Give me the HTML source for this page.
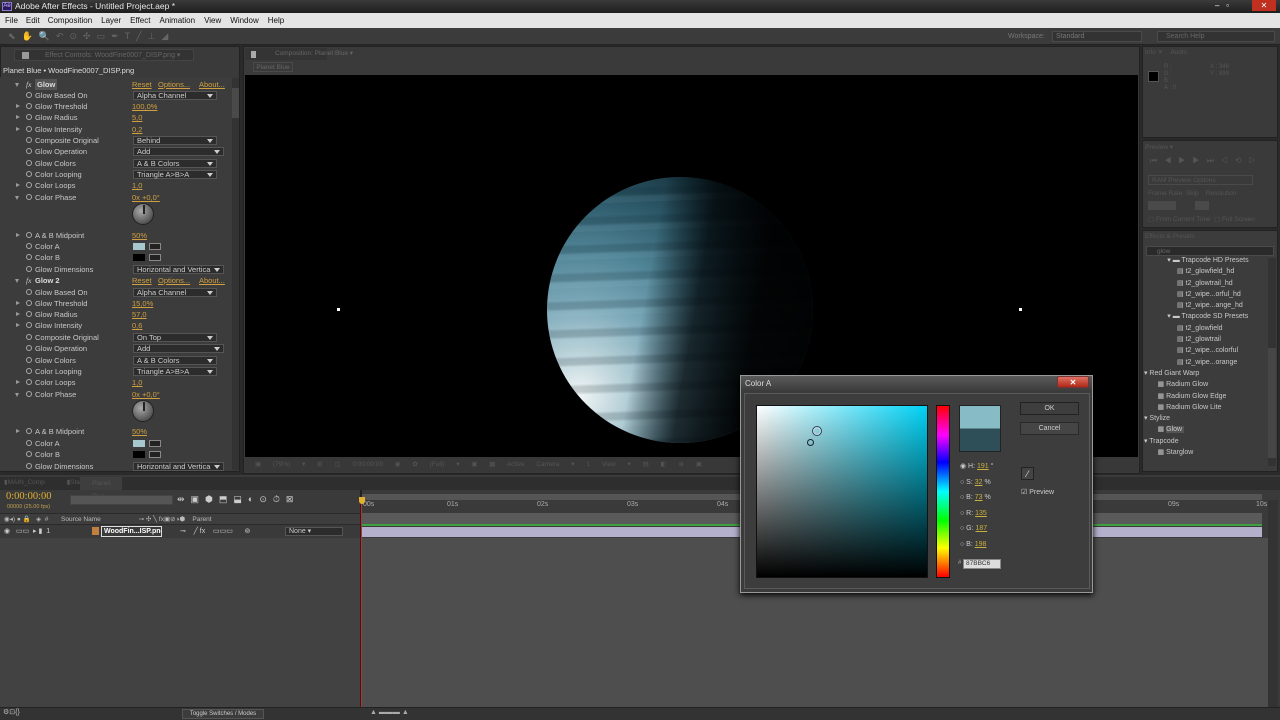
<!DOCTYPE html>
<html><head><meta charset="utf-8"><style>
*{margin:0;padding:0;box-sizing:border-box}
body{width:1280px;height:720px;overflow:hidden;background:#2a2a2a;font-family:"Liberation Sans",sans-serif;position:relative;color:#c8c8c8}
.a{position:absolute}
.r{position:absolute;left:0;width:232px;height:11px;font-size:7.5px;line-height:11px;white-space:nowrap}
.r .l{position:absolute;left:35px}
.r .sw{position:absolute;left:26px;top:2px;width:6px;height:6px;border:1px solid #aaa;border-radius:50%}
.r .ar{position:absolute;left:16px;top:3px;width:0;height:0;border-left:4px solid #999;border-top:2.5px solid transparent;border-bottom:2.5px solid transparent}
.r .dn{position:absolute;left:15px;top:4px;border-top:4px solid #999;border-left:2.5px solid transparent;border-right:2.5px solid transparent}
.r .v{position:absolute;left:132px;color:#d0a040;text-decoration:underline}
.r .dd{position:absolute;left:133px;top:1px;width:84px;height:9px;background:#2c2c2c;border:1px solid #555;line-height:8px;padding-left:3px;color:#ccc}
.r .dd:after{content:"";position:absolute;right:3px;top:2px;border-top:4px solid #ccc;border-left:3px solid transparent;border-right:3px solid transparent}
.r .sq{position:absolute;left:133px;top:2px;width:12px;height:7px}
.r .ey{position:absolute;left:149px;top:2px;width:12px;height:7px;background:#222;border:1px solid #888}
.hd{font-weight:bold;color:#ddd}
.knob{position:absolute;left:132px;width:22px;height:22px;border-radius:50%;background:radial-gradient(circle at 40% 35%,#aaa,#555 70%,#333);border:1px solid #222}
.knob:after{content:"";position:absolute;left:10px;top:1px;width:1.5px;height:9px;background:#222}
.tl{font-size:7px;color:#aaa;position:absolute}
</style></head><body>
<div class="a" style="left:0;top:0;width:1280px;height:13px;background:linear-gradient(#3a3a3a,#1e1e1e)"></div>
<div class="a" style="left:2px;top:2px;width:10px;height:9px;background:#2a1a5a;border:1px solid #8c7ad0;font-size:6px;color:#c9b8ff;line-height:7px;text-align:center">Ae</div>
<div class="a" style="left:15px;top:1px;font-size:8.5px;color:#e8e8e8">Adobe After Effects - Untitled Project.aep *</div>
<div class="a" style="left:1215px;top:1px;font-size:8px;color:#fff">–&nbsp;&nbsp;&nbsp;▫&nbsp;&nbsp;&nbsp;</div>
<div class="a" style="left:1252px;top:0;width:24px;height:11px;background:#c03020;color:#fff;font-size:8px;text-align:center;line-height:11px">✕</div>
<div class="a" style="left:0;top:13px;width:1280px;height:15px;background:#e4e4e4;font-size:8px;color:#111;line-height:15px">
<span style="margin-left:5px">File</span><span style="margin-left:8px">Edit</span><span style="margin-left:8px">Composition</span><span style="margin-left:9px">Layer</span><span style="margin-left:9px">Effect</span><span style="margin-left:9px">Animation</span><span style="margin-left:9px">View</span><span style="margin-left:9px">Window</span><span style="margin-left:9px">Help</span></div>
<div class="a" style="left:0;top:28px;width:1280px;height:17px;background:#3b3b3b;border-bottom:1px solid #222"></div>
<div class="a" style="left:8px;top:31px;font-size:9px;color:#666;letter-spacing:6px">⬉✋🔍↶⊙✣▭✒T╱⊥◢</div>
<div class="a" style="left:1008px;top:33px;font-size:7px;color:#777">Workspace:</div>
<div class="a" style="left:1052px;top:31px;width:90px;height:11px;background:#333;border:1px solid #4a4a4a;font-size:7px;color:#777;padding-left:3px;line-height:10px">Standard</div>
<div class="a" style="left:1157px;top:31px;width:118px;height:11px;background:#333;border:1px solid #4a4a4a;font-size:7px;color:#666;padding-left:8px;line-height:10px">Search Help</div>
<div class="a" style="left:0;top:46px;width:240px;height:426px;background:#3a3a3a;border:1px solid #222"></div>
<div class="a" style="left:14px;top:49px;width:180px;height:12px;background:#333;border:1px solid #444;font-size:7px;color:#666;line-height:11px;padding-left:30px">Effect Controls: WoodFine0007_DISP.png ▾</div>
<div class="a" style="left:22px;top:52px;width:7px;height:7px;background:#999"></div>
<div class="a" style="left:3px;top:66px;font-size:7.5px;color:#ddd">Planet Blue • WoodFine0007_DISP.png</div>
<div class="a" style="left:0;top:77px;width:232px;height:394px;background:#3c3c3c"></div>
<div class="a" style="left:232px;top:78px;width:7px;height:392px;background:#333"></div>
<div class="a" style="left:232px;top:88px;width:7px;height:30px;background:#4a4a4a"></div>

<div class="r" style="top:79px"><span class="dn"></span><span class="a" style="left:26px;color:#ccc;font-style:italic;font-family:'Liberation Serif'">fx</span><span class="l hd" style="background:#555;padding:0 2px">Glow</span><span class="a" style="left:132px;color:#d0a040;text-decoration:underline">Reset</span><span class="a" style="left:158px;color:#d0a040;text-decoration:underline">Options...</span><span class="a" style="left:199px;color:#d0a040;text-decoration:underline">About...</span></div>
<div class="r" style="top:90px"><span class="sw"></span><span class="l">Glow Based On</span><span class="dd">Alpha Channel</span></div>
<div class="r" style="top:101px"><span class="ar"></span><span class="sw"></span><span class="l">Glow Threshold</span><span class="v">100,0%</span></div>
<div class="r" style="top:112px"><span class="ar"></span><span class="sw"></span><span class="l">Glow Radius</span><span class="v">5,0</span></div>
<div class="r" style="top:124px"><span class="ar"></span><span class="sw"></span><span class="l">Glow Intensity</span><span class="v">0,2</span></div>
<div class="r" style="top:135px"><span class="sw"></span><span class="l">Composite Original</span><span class="dd">Behind</span></div>
<div class="r" style="top:146px"><span class="sw"></span><span class="l">Glow Operation</span><span class="dd" style="width:91px">Add</span></div>
<div class="r" style="top:158px"><span class="sw"></span><span class="l">Glow Colors</span><span class="dd">A &amp; B Colors</span></div>
<div class="r" style="top:169px"><span class="sw"></span><span class="l">Color Looping</span><span class="dd">Triangle A&gt;B&gt;A</span></div>
<div class="r" style="top:180px"><span class="ar"></span><span class="sw"></span><span class="l">Color Loops</span><span class="v">1,0</span></div>
<div class="r" style="top:192px"><span class="dn"></span><span class="sw"></span><span class="l">Color Phase</span><span class="v">0x +0,0°</span></div>
<div class="knob" style="top:203px"></div>
<div class="r" style="top:230px"><span class="ar"></span><span class="sw"></span><span class="l">A &amp; B Midpoint</span><span class="v">50%</span></div>
<div class="r" style="top:241px"><span class="sw"></span><span class="l">Color A</span><span class="sq" style="background:#a8c8d0"></span><span class="ey"></span></div>
<div class="r" style="top:252px"><span class="sw"></span><span class="l">Color B</span><span class="sq" style="background:#000"></span><span class="ey"></span></div>
<div class="r" style="top:264px"><span class="sw"></span><span class="l">Glow Dimensions</span><span class="dd" style="width:91px">Horizontal and Vertica</span></div>

<div class="r" style="top:275px"><span class="dn"></span><span class="a" style="left:26px;color:#ccc;font-style:italic;font-family:'Liberation Serif'">fx</span><span class="l hd">Glow 2</span><span class="a" style="left:132px;color:#d0a040;text-decoration:underline">Reset</span><span class="a" style="left:158px;color:#d0a040;text-decoration:underline">Options...</span><span class="a" style="left:199px;color:#d0a040;text-decoration:underline">About...</span></div>
<div class="r" style="top:287px"><span class="sw"></span><span class="l">Glow Based On</span><span class="dd">Alpha Channel</span></div>
<div class="r" style="top:298px"><span class="ar"></span><span class="sw"></span><span class="l">Glow Threshold</span><span class="v">15,0%</span></div>
<div class="r" style="top:309px"><span class="ar"></span><span class="sw"></span><span class="l">Glow Radius</span><span class="v">57,0</span></div>
<div class="r" style="top:320px"><span class="ar"></span><span class="sw"></span><span class="l">Glow Intensity</span><span class="v">0,6</span></div>
<div class="r" style="top:332px"><span class="sw"></span><span class="l">Composite Original</span><span class="dd">On Top</span></div>
<div class="r" style="top:343px"><span class="sw"></span><span class="l">Glow Operation</span><span class="dd" style="width:91px">Add</span></div>
<div class="r" style="top:355px"><span class="sw"></span><span class="l">Glow Colors</span><span class="dd">A &amp; B Colors</span></div>
<div class="r" style="top:366px"><span class="sw"></span><span class="l">Color Looping</span><span class="dd">Triangle A&gt;B&gt;A</span></div>
<div class="r" style="top:377px"><span class="ar"></span><span class="sw"></span><span class="l">Color Loops</span><span class="v">1,0</span></div>
<div class="r" style="top:389px"><span class="dn"></span><span class="sw"></span><span class="l">Color Phase</span><span class="v">0x +0,0°</span></div>
<div class="knob" style="top:400px"></div>
<div class="r" style="top:426px"><span class="ar"></span><span class="sw"></span><span class="l">A &amp; B Midpoint</span><span class="v">50%</span></div>
<div class="r" style="top:438px"><span class="sw"></span><span class="l">Color A</span><span class="sq" style="background:#a8c8d0"></span><span class="ey"></span></div>
<div class="r" style="top:449px"><span class="sw"></span><span class="l">Color B</span><span class="sq" style="background:#000"></span><span class="ey"></span></div>
<div class="r" style="top:461px"><span class="sw"></span><span class="l">Glow Dimensions</span><span class="dd" style="width:91px">Horizontal and Vertica</span></div>

<div class="a" style="left:243px;top:46px;width:897px;height:428px;background:#3a3a3a;border:1px solid #222"></div>
<div class="a" style="left:245px;top:48px;width:82px;height:12px;background:#343434;font-size:6.5px;color:#666;line-height:12px;padding-left:30px;white-space:nowrap">Composition: Planet Blue ▾</div>
<div class="a" style="left:251px;top:51px;width:5px;height:7px;background:#aaa"></div>
<div class="a" style="left:253px;top:62px;width:40px;height:10px;border:1px solid #4a4a4a;font-size:6.5px;color:#666;text-align:center;line-height:9px">Planet Blue</div>
<div class="a" style="left:245px;top:75px;width:893px;height:382px;background:#000"></div>
<div class="a" style="left:533px;top:163px;width:294px;height:294px;border-radius:50%;background:radial-gradient(circle,rgba(0,0,0,0) 44%,rgba(150,165,170,.45) 45.5%,rgba(70,85,90,.2) 48%,rgba(0,0,0,0) 56%)"></div>
<div class="a" style="left:547px;top:177px;width:266px;height:266px;border-radius:50%;overflow:hidden;background:radial-gradient(circle at 12% 82%,#f2f6f6 0%,#c0d6dc 12%,#7eaaba 28%,#4f8496 45%,#2c5868 62%,#132c36 80%,#061014 100%)">
<div class="a" style="left:0;top:0;width:266px;height:266px;background:repeating-linear-gradient(178deg,rgba(0,0,0,0) 0 12px,rgba(10,30,40,.18) 15px 20px,rgba(200,230,240,.06) 23px 28px)"></div>
<div class="a" style="left:0;top:0;width:266px;height:266px;background:linear-gradient(100deg,rgba(0,0,0,0) 38%,rgba(0,4,6,.75) 55%,rgba(0,0,0,.95) 75%)"></div>
</div>
<div class="a" style="left:337px;top:308px;width:3px;height:3px;background:#fff"></div>
<div class="a" style="left:1019px;top:308px;width:3px;height:3px;background:#fff"></div>
<div class="a" style="left:245px;top:457px;width:893px;height:15px;background:#383838;font-size:6.5px;color:#555;line-height:15px;padding-left:10px;word-spacing:10px">▣ (79%) ▾ ⊞ ◫ 0:00:00:00 ◉ ✿ (Full) ▾ ▣ ▩ Active Camera ▾ 1 View ▾ ▤ ◧ ⊕ ▣</div>
<div class="a" style="left:1142px;top:46px;width:136px;height:92px;background:#3a3a3a;border:1px solid #222"></div>
<div class="a" style="left:1145px;top:48px;font-size:6.5px;color:#555">Info ✕ &nbsp;&nbsp;&nbsp;Audio</div>
<div class="a" style="left:1148px;top:71px;width:11px;height:11px;background:#000;border:1px solid #555"></div>
<div class="a" style="left:1164px;top:64px;font-size:6px;color:#555;line-height:7px">R :<br>G :<br>B :<br>A : 0</div>
<div class="a" style="left:1210px;top:64px;font-size:6px;color:#555;line-height:7px">X : 346<br>Y : 899</div>
<div class="a" style="left:1142px;top:140px;width:136px;height:88px;background:#3a3a3a;border:1px solid #222"></div>
<div class="a" style="left:1145px;top:143px;font-size:6.5px;color:#555">Preview ▾</div>
<div class="a" style="left:1150px;top:156px;font-size:8px;color:#555;letter-spacing:7px">⏮◀▶▶⏭◁⟲▷</div>
<div class="a" style="left:1148px;top:175px;width:105px;height:10px;border:1px solid #4a4a4a;font-size:6.5px;color:#555;padding-left:3px;line-height:9px">RAM Preview Options</div>
<div class="a" style="left:1148px;top:190px;font-size:6.5px;color:#555">Frame Rate &nbsp;Skip &nbsp;&nbsp;&nbsp;Resolution</div>
<div class="a" style="left:1148px;top:201px;width:28px;height:9px;background:#4a4a4a"></div>
<div class="a" style="left:1195px;top:201px;width:14px;height:9px;background:#4a4a4a"></div>
<div class="a" style="left:1148px;top:215px;font-size:6.5px;color:#555">▢ From Current Time &nbsp;▢ Full Screen</div>
<div class="a" style="left:1142px;top:230px;width:136px;height:242px;background:#3c3c3c;border:1px solid #222"></div>
<div class="a" style="left:1145px;top:233px;font-size:6.5px;color:#555">Effects &amp; Presets</div>
<div class="a" style="left:1146px;top:246px;width:128px;height:10px;background:#2a2a2a;border:1px solid #4a4a4a;font-size:6.5px;color:#666;padding-left:10px;line-height:9px">glow</div>
<div class="a" style="left:1268px;top:258px;width:8px;height:208px;background:#333"></div>
<div class="a" style="left:1268px;top:348px;width:8px;height:110px;background:#464646"></div>
<div class="a" style="left:1142px;top:255px;font-size:7px;color:#c8c8c8;line-height:11.3px;white-space:pre">             ▾ ▬ Trapcode HD Presets
                  ▤ t2_glowfield_hd
                  ▤ t2_glowtrail_hd
                  ▤ t2_wipe...orful_hd
                  ▤ t2_wipe...ange_hd
             ▾ ▬ Trapcode SD Presets
                  ▤ t2_glowfield
                  ▤ t2_glowtrail
                  ▤ t2_wipe...colorful
                  ▤ t2_wipe...orange
 ▾ Red Giant Warp
        ▦ Radium Glow
        ▦ Radium Glow Edge
        ▦ Radium Glow Lite
 ▾ Stylize
        ▦ <span style="background:#555">Glow </span>
 ▾ Trapcode
        ▦ Starglow</div>
<div class="a" style="left:0;top:475px;width:1280px;height:245px;background:#3a3a3a"></div>
<div class="a" style="left:0;top:477px;width:1280px;height:13px;background:#2e2e2e"></div>
<div class="a" style="left:4px;top:478px;font-size:6.5px;color:#555;word-spacing:20px">▮MAIN_Comp ▮Stars</div>
<div class="a" style="left:80px;top:477px;width:42px;height:13px;background:#3e3e3e;font-size:6.5px;color:#555;line-height:13px;padding-left:12px">Planet Blue</div>
<div class="a" style="left:6px;top:491px;font-size:10.5px;color:#e0b030;font-family:'Liberation Serif',serif">0:00:00:00</div>
<div class="a" style="left:7px;top:504px;font-size:5.5px;color:#c0a050">00000 (25.00 fps)</div>
<div class="a" style="left:70px;top:495px;width:103px;height:10px;background:#555;border:1px solid #444"></div>
<div class="a" style="left:177px;top:494px;font-size:9px;color:#ccc;letter-spacing:6px">⇹▣⬢⬒⬓◐⊙⏱⊠</div>
<div class="a" style="left:0;top:513px;width:360px;height:12px;background:#3e3e3e;border-top:1px solid #2a2a2a;border-bottom:1px solid #2a2a2a"></div>
<div class="a" style="left:4px;top:515px;font-size:6.5px;color:#bbb;white-space:pre">◉◂) ● 🔒   ◈  #       Source Name                     ⊸ ✣ ╲ fx▣⊘◑⬢    Parent</div>
<div class="a" style="left:0;top:526px;width:360px;height:11px;background:#3a3a3a"></div>
<div class="a" style="left:4px;top:527px;font-size:7px;color:#ccc;white-space:pre">◉   ▭▭  ▸ ▮  1</div>
<div class="a" style="left:92px;top:527px;width:7px;height:8px;background:#c08040"></div>
<div class="a" style="left:101px;top:526px;width:61px;height:11px;border:1px solid #ddd;background:#3a3a3a;font-size:7px;color:#fff;font-weight:bold;line-height:9px;padding-left:2px;overflow:hidden;white-space:nowrap">WoodFin...ISP.png</div>
<div class="a" style="left:180px;top:527px;font-size:7px;color:#ccc;white-space:pre">⊸    ╱ fx    ▭▭▭      ⊚</div>
<div class="a" style="left:285px;top:527px;width:58px;height:9px;background:#2c2c2c;border:1px solid #555;font-size:7px;color:#ccc;line-height:8px;padding-left:3px">None ▾</div>
<div class="a" style="left:0;top:538px;width:360px;height:169px;background:#424242"></div>
<div class="a" style="left:360px;top:490px;width:2px;height:217px;background:#222"></div>
<div class="a" style="left:362px;top:494px;width:900px;height:6px;background:#555"></div>
<div class="a" style="left:362px;top:500px;width:900px;height:13px;background:#3a3a3a"></div>
<div class="tl" style="left:363px;top:501px">00s</div><div class="tl" style="left:447px;top:501px">01s</div><div class="tl" style="left:537px;top:501px">02s</div><div class="tl" style="left:627px;top:501px">03s</div><div class="tl" style="left:717px;top:501px">04s</div><div class="tl" style="left:1168px;top:501px">09s</div><div class="tl" style="left:1256px;top:501px">10s</div>
<div class="a" style="left:362px;top:513px;width:900px;height:12px;background:#5a5a5a"></div>
<div class="a" style="left:362px;top:524px;width:900px;height:2px;background:#3fa040"></div>
<div class="a" style="left:362px;top:527px;width:900px;height:10px;background:#b4b0cc"></div>
<div class="a" style="left:362px;top:538px;width:906px;height:169px;background:#4e4e4e"></div>
<div class="a" style="left:361px;top:498px;width:1px;height:209px;background:#c03030"></div>
<div class="a" style="left:359px;top:497px;width:6px;height:7px;background:#e0b030;border-radius:0 0 3px 3px"></div>
<div class="a" style="left:1268px;top:500px;width:10px;height:207px;background:#333"></div>
<div class="a" style="left:0;top:707px;width:1280px;height:13px;background:#333;border-top:1px solid #222"></div>
<div class="a" style="left:3px;top:708px;font-size:7px;color:#bbb">⚙⊡{}</div>
<div class="a" style="left:182px;top:709px;width:82px;height:10px;background:#3c3c3c;border:1px solid #555;font-size:6px;color:#ccc;text-align:center;line-height:9px">Toggle Switches / Modes</div>
<div class="a" style="left:370px;top:709px;font-size:7px;color:#aaa">▲ ▬▬▬ ▲</div>
<div class="a" style="left:740px;top:375px;width:353px;height:218px;background:#3b3b3b;border:1px solid #999;box-shadow:0 2px 6px #000"></div>
<div class="a" style="left:741px;top:376px;width:351px;height:16px;background:linear-gradient(#5a5a5a,#3a3a3a)"></div>
<div class="a" style="left:745px;top:379px;font-size:8px;color:#ddd">Color A</div>
<div class="a" style="left:1057px;top:376px;width:32px;height:12px;background:linear-gradient(#e07060,#b02818);border:1px solid #733;border-radius:2px;color:#fff;font-size:8px;text-align:center;line-height:11px;font-weight:bold">✕</div>
<div class="a" style="left:744px;top:393px;width:346px;height:196px;border:1px solid #5a5a5a;background:#3d3d3d"></div>
<div class="a" style="left:756px;top:405px;width:172px;height:173px;background:linear-gradient(to bottom,rgba(0,0,0,0),#000),linear-gradient(to right,#fff,#00d2f5);border:1px solid #111"></div>
<div class="a" style="left:812px;top:426px;width:10px;height:10px;border:1px solid #345;border-radius:50%;box-shadow:0 0 0 1px #cde inset"></div>
<div class="a" style="left:807px;top:439px;width:7px;height:7px;border:1px solid #123;border-radius:50%"></div>
<div class="a" style="left:936px;top:405px;width:14px;height:173px;border:1px solid #111;background:linear-gradient(#f00,#f0f 17%,#00f 33%,#0ff 50%,#0f0 67%,#ff0 83%,#f00)"></div>
<div class="a" style="left:959px;top:405px;width:42px;height:47px;border:1px solid #222;background:linear-gradient(#87bbc6 50%,#2f4f58 50%)"></div>
<div class="a" style="left:1020px;top:402px;width:59px;height:13px;border:1px solid #222;background:#3e3e3e;font-size:7px;color:#ccc;text-align:center;line-height:11px">OK</div>
<div class="a" style="left:1020px;top:422px;width:59px;height:13px;border:1px solid #2a2a2a;background:#454545;font-size:7px;color:#ccc;text-align:center;line-height:11px">Cancel</div>
<div class="a" style="left:960px;top:459px;font-size:7px;color:#ccc;line-height:15.5px;white-space:pre">◉ H: <span style="color:#c8b040;text-decoration:underline">191</span> °
○ S: <span style="color:#c8b040;text-decoration:underline">32</span> %
○ B: <span style="color:#c8b040;text-decoration:underline">73</span> %
○ R: <span style="color:#c8b040;text-decoration:underline">135</span>
○ G: <span style="color:#c8b040;text-decoration:underline">187</span>
○ B: <span style="color:#c8b040;text-decoration:underline">198</span></div>
<div class="a" style="left:958px;top:560px;font-size:6px;color:#aaa">#</div>
<div class="a" style="left:963px;top:559px;width:38px;height:10px;background:#ddd;border:1px solid #888;font-size:6.5px;color:#333;line-height:8px;padding-left:2px">87BBC6</div>
<div class="a" style="left:1021px;top:467px;width:13px;height:13px;border:1px solid #222;background:#444;color:#ddd;font-size:9px;text-align:center;line-height:12px">⁄</div>
<div class="a" style="left:1021px;top:488px;font-size:7px;color:#ccc">☑ Preview</div>
</body></html>
